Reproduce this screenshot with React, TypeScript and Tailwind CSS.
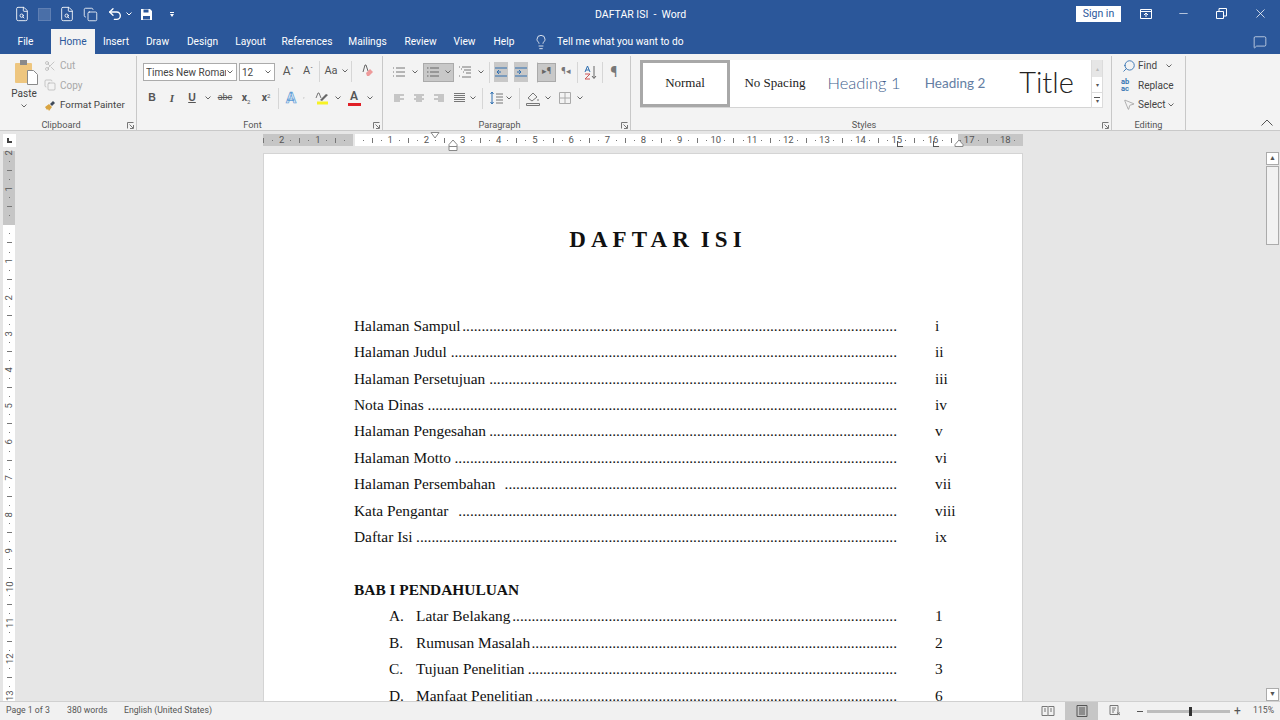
import { ReactNode } from "react";
import { Scissors, Copy, Undo2, Lightbulb, MessageSquare, X, Minus, Search, MousePointer2, FileSearch } from "lucide-react";

// label, page number, how many leader dots were typed on that line
const frontMatter: [string, string, number][] = [
  ["Halaman Sampul", "i", 113],
  ["Halaman Judul ", "ii", 116],
  ["Halaman Persetujuan ", "iii", 106],
  ["Nota Dinas ", "iv", 122],
  ["Halaman Pengesahan", "v", 106],
  ["Halaman Motto ", "vi", 115],
  ["Halaman Persembahan  ", "vii", 102],
  ["Kata Pengantar  ", "viii", 114],
  ["Daftar Isi ", "ix", 125],
];

const babOne: [string, string, string, number][] = [
  ["A.", "Latar Belakang", "1", 100],
  ["B.", "Rumusan Masalah", "2", 95],
  ["C.", "Tujuan Penelitian ", "3", 96],
  ["D.", "Manfaat Penelitian ", "6", 94],
];

const tabs = [
  ["File", "w-[51px]"],
  ["Home", "w-[44px]"],
  ["Insert", "w-[42px]"],
  ["Draw", "w-[41px]"],
  ["Design", "w-[49px]"],
  ["Layout", "w-[47px]"],
  ["References", "w-[66px]"],
  ["Mailings", "w-[55px]"],
  ["Review", "w-[51px]"],
  ["View", "w-[37px]"],
  ["Help", "w-[42px]"],
];

const Chev = ({ color = "#666" }: { color?: string }) => (
  <svg width="6" height="4" viewBox="0 0 6 4" fill="none" stroke={color} strokeWidth="1">
    <path d="M.5.5 3 3 5.5.5" />
  </svg>
);

const Cell = ({ className, children }: { className: string; children?: ReactNode }) => (
  <div className={`flex h-[20px] shrink-0 items-center justify-center ${className}`}>{children}</div>
);

const Sep = () => <div className="h-[21px] w-px shrink-0 bg-[#d6d6d6]" />;

const Launcher = () => (
  <svg width="7" height="7" viewBox="0 0 7 7" fill="none" stroke="#777" strokeWidth="1">
    <path d="M.5 6.5v-6h6M6.5 3v3.500H3M2.500 2.500l3.500 3.500" />
  </svg>
);

const Lines = ({ d, color = "#777" }: { d: string; color?: string }) => (
  <svg width="14" height="14" viewBox="0 0 14 14" fill="none" stroke={color} strokeWidth="1">
    <path d={d} />
  </svg>
);

const Group = ({ label, className, children, launcher = true }: { label: string; className: string; children: ReactNode; launcher?: boolean }) => (
  <div className={`flex h-[76px] shrink-0 flex-col border-r border-[#c8c8c8] ${className}`}>
    <div className="min-h-0 flex-1">{children}</div>
    {launcher ? (
      <div className="relative flex h-[14px] items-center justify-center pr-[14px] text-[9.200px] text-[#555]">
        {label}
        <span className="absolute right-[2px] top-[4px] flex">
          <Launcher />
        </span>
      </div>
    ) : (
      <div className="flex h-[14px] items-center justify-center text-[9.200px] text-[#555]">{label}</div>
    )}
  </div>
);

const Clipboard = () => (
  <Group label="Clipboard" className="w-[137px]">
    <div className="flex">
      <div className="flex w-[44px] flex-col items-center pl-[4px] pt-[4px]">
        <svg className="ml-[4px]" width="23" height="25" viewBox="0 0 23 25">
          <rect x="0" y="3" width="17" height="20" rx="1" fill="#eec67f" />
          <rect x="5" y="0" width="7" height="5" fill="#8a8a8a" />
          <path d="M12.500 10.500h6l4 4v10h-10z" fill="#fff" stroke="#8a8a8a" strokeWidth="1" />
        </svg>
        <span className="mt-[2px] text-[10px] leading-[14px] text-[#444]">Paste</span>
        <span className="mt-[3px] flex">
          <Chev />
        </span>
      </div>
      <div className="flex flex-col text-[10px] leading-[19.500px]">
        <div className="flex h-[19.500px] items-center gap-[4px] text-[#a8a8a8]">
          <Scissors size={12} strokeWidth={1.200} />
          <span>Cut</span>
        </div>
        <div className="flex h-[19.500px] items-center gap-[4px] text-[#a8a8a8]">
          <Copy size={12} strokeWidth={1.200} />
          <span>Copy</span>
        </div>
        <div className="flex h-[19.500px] items-center gap-[4px] text-[9.800px] text-[#444]">
          <svg width="12" height="12" viewBox="0 0 12 12">
            <path d="M1 8l4-3 3 3-3 4-1-2-1 1z" fill="#d9a441" />
            <path d="M6 5l3-3 2 2-3 3z" fill="#3f4a5a" />
          </svg>
          <span>Format Painter</span>
        </div>
      </div>
    </div>
  </Group>
);

const FontGroup = () => (
  <Group label="Font" className="w-[246px]">
    <div className="flex h-[25px] items-end pl-[6px]">
      <div className="flex h-[18px] w-[94px] items-center justify-between border border-[#ababab] bg-white pl-[2px] pr-[3px] text-[10px] text-[#444]">
        <span className="overflow-hidden whitespace-nowrap">Times New Romar</span>
        <span className="ml-[1px] flex shrink-0">
          <Chev />
        </span>
      </div>
      <div className="ml-[2px] flex h-[18px] w-[36px] items-center justify-between border border-[#ababab] bg-white pl-[2px] pr-[3px] text-[10px] text-[#444]">
        <span>12</span>
        <Chev />
      </div>
      <div className="flex h-[20px] items-center text-[#555]">
        <Cell className="ml-[2px] w-[22px] text-[12px]">
          A<span className="mb-[6px] text-[6px]">^</span>
        </Cell>
        <Cell className="w-[18px] text-[11px]">
          A<span className="mb-[6px] text-[6px]">ˇ</span>
        </Cell>
        <span className="ml-[2px]">
          <Sep />
        </span>
        <Cell className="w-[22px] text-[11px]">Aa</Cell>
        <Cell className="w-[6px]">
          <Chev />
        </Cell>
        <span className="ml-[3px]">
          <Sep />
        </span>
        <Cell className="ml-[2px] w-[26px]">
          <svg width="14" height="14" viewBox="0 0 14 14">
            <path d="M3 8 5 1h1l2 6" fill="none" stroke="#666" />
            <path d="m6 9 4-4 3 3-4 4H7z" fill="#ee9a9a" />
          </svg>
        </Cell>
      </div>
    </div>
    <div className="mt-[7px] flex h-[20px] items-center pl-[5px] text-[#555]">
      <Cell className="w-[20px] font-['Liberation_Sans',sans-serif] text-[10.500px] font-bold">B</Cell>
      <Cell className="w-[20px] font-['Liberation_Serif',serif] text-[11px] font-bold italic">I</Cell>
      <Cell className="w-[20px] font-['Liberation_Sans',sans-serif] text-[10.500px] font-bold underline">U</Cell>
      <Cell className="w-[12px]">
        <Chev />
      </Cell>
      <Cell className="w-[22px] text-[9px] line-through">abc</Cell>
      <Cell className="w-[20px] text-[10.500px] font-bold">
        x<span className="mt-[6px] text-[6px] font-normal">2</span>
      </Cell>
      <Cell className="w-[20px] text-[10.500px] font-bold">
        x<span className="mb-[6px] text-[6px] font-normal">2</span>
      </Cell>
      <span className="ml-[2px]">
        <Sep />
      </span>
      <Cell className="w-[24px] text-[15px] font-bold text-[#dbe8f5] [-webkit-text-stroke:0.7px_#5b9bd5]">A</Cell>
      <Cell className="w-[2px]">
        <Chev />
      </Cell>
      <Cell className="ml-[5px] w-[24px]">
        <svg width="15" height="15" viewBox="0 0 15 15">
          <path d="M2 12h11" stroke="#f7f224" strokeWidth="3" />
          <path d="m5 9 6-6 2 1-6 6z" fill="#666" />
          <path d="M1 7 3 2h1l2 5" fill="none" stroke="#777" />
        </svg>
      </Cell>
      <Cell className="w-[8px]">
        <Chev />
      </Cell>
      <div className="ml-[2px] flex h-[20px] w-[20px] flex-col items-center justify-center">
        <span className="text-[12px] font-semibold leading-[11px] text-[#555]">A</span>
        <span className="mt-[1px] h-[3px] w-[13px] bg-[#e01f26]" />
      </div>
      <Cell className="ml-[2px] w-[8px]">
        <Chev />
      </Cell>
    </div>
  </Group>
);

const ParagraphGroup = () => (
  <Group label="Paragraph" className="w-[248px]">
    <div className="flex h-[26px] items-end pl-[9px]">
      <div className="flex h-[20px] items-center">
        <Cell className="w-[14px]">
          <Lines d="M1 3h1M1 7h1M1 11h1M4 3h9M4 7h9M4 11h9" />
        </Cell>
        <Cell className="ml-[5px] w-[8px]">
          <Chev />
        </Cell>
        <div className="ml-[4px] flex h-[19px] w-[31px] items-center justify-center gap-[5px] border border-[#aaa] bg-[#c8c8c8]">
          <Lines d="M1 3h1.500M1 7h1.500M1 11h1.500M4 3h9M4 7h9M4 11h9" color="#666" />
          <Chev />
        </div>
        <Cell className="ml-[4px] w-[14px]">
          <Lines d="M1 2h1M3 4h1M5 7h1M1 11h1M4 2h9M6 5h7M8 8h5M4 12h9" />
        </Cell>
        <Cell className="ml-[5px] w-[8px]">
          <Chev />
        </Cell>
        <span className="ml-[4px]">
          <Sep />
        </span>
        <Cell className="ml-[4px] w-[14px] bg-[#c8c8c8]">
          <Lines d="M1 3h12M1 11h12M7 7H3M5 5 3 7l2 2" color="#2f6fb0" />
        </Cell>
        <Cell className="ml-[6px] w-[14px] bg-[#c8c8c8]">
          <Lines d="M1 3h12M1 11h12M3 7h4M5 5l2 2-2 2" color="#2f6fb0" />
        </Cell>
        <span className="ml-[9px]">
          <Sep />
        </span>
        <div className="ml-[-1px] flex h-[19px] w-[19px] items-center justify-center border border-[#aaa] bg-[#c8c8c8] text-[9px] text-[#666]">
          ▸¶
        </div>
        <Cell className="ml-[1px] w-[18px] text-[9px] text-[#777]">¶◂</Cell>
        <span className="ml-[2px]">
          <Sep />
        </span>
        <Cell className="ml-[4px] w-[18px]">
          <svg width="14" height="15" viewBox="0 0 14 15" fill="none">
            <path d="M1 7 3.500 1 6 7M2 5h3" stroke="#2f6fb0" />
            <path d="M1 9h5l-5 5h5" stroke="#c55" />
            <path d="M10 1v12M8 11l2 2.500 2-2.500" stroke="#666" />
          </svg>
        </Cell>
        <span className="ml-[2px]">
          <Sep />
        </span>
        <Cell className="w-[22px] text-[14px] text-[#777]">¶</Cell>
      </div>
    </div>
    <div className="mt-[6px] flex h-[20px] items-center pl-[9px]">
      <Cell className="w-[14px]">
        <Lines d="M2 4h10M2 6h6M2 8h10M2 10h6" color="#999" />
      </Cell>
      <Cell className="ml-[6px] w-[14px]">
        <Lines d="M2 4h10M4 6h6M2 8h10M4 10h6" color="#999" />
      </Cell>
      <Cell className="ml-[6px] w-[14px]">
        <Lines d="M2 4h10M6 6h6M2 8h10M6 10h6" color="#999" />
      </Cell>
      <Cell className="ml-[6px] w-[14px]">
        <Lines d="M2 2.500h11M2 4.500h11M2 6.500h11M2 8.500h11M2 10.500h11" color="#777" />
      </Cell>
      <Cell className="ml-[3px] w-[8px]">
        <Chev />
      </Cell>
      <span className="ml-[5px]">
        <Sep />
      </span>
      <Cell className="ml-[7px] w-[14px]">
        <svg width="14" height="14" viewBox="0 0 14 14" fill="none">
          <path d="M2 1v12M.5 3 2 1l1.500 2M.5 11 2 13l1.500-2" stroke="#2f6fb0" />
          <path d="M6 3h7M6 6h7M6 9h7M6 12h7" stroke="#777" />
        </svg>
      </Cell>
      <Cell className="ml-[1px] w-[8px]">
        <Chev />
      </Cell>
      <span className="ml-[6px]">
        <Sep />
      </span>
      <Cell className="ml-[6px] w-[14px]">
        <svg width="14" height="15" viewBox="0 0 14 15" fill="none" stroke="#777">
          <path d="m2 7 5-5 4 4-5 4zM12 8v2" />
          <path d="M.5 12.500h13v2H.5z" fill="#eee" />
        </svg>
      </Cell>
      <Cell className="ml-[4px] w-[8px]">
        <Chev />
      </Cell>
      <Cell className="ml-[6px] w-[14px]">
        <Lines d="M1.500 1.500h11v11h-11zM7 1.500v11M1.500 7h11" color="#aaa" />
      </Cell>
      <Cell className="ml-[4px] w-[8px]">
        <Chev />
      </Cell>
    </div>
  </Group>
);

const StylesGroup = () => (
  <Group label="Styles" className="w-[481px]">
    <div className="flex h-[52px] pl-[9px] pt-[4px]">
      <div className="flex h-[48px] w-[451px] items-center border-b border-[#d4d4d4] bg-white">
        <div className="flex h-[47px] w-[90px] items-center justify-center border-[3px] border-[#a8a8a8] pb-[2px] font-['Liberation_Serif',serif] text-[13px] text-[#222]">
          Normal
        </div>
        <div className="w-[90px] pb-[2px] text-center font-['Liberation_Serif',serif] text-[13px] text-[#222]">No Spacing</div>
        <div className="w-[88px] text-center font-['Lato',sans-serif] text-[16.500px] font-light text-[#3f5f8e]">Heading 1</div>
        <div className="w-[94px] text-center font-['Lato',sans-serif] text-[13.500px] text-[#647ea3]">Heading 2</div>
        <div className="flex-1 pb-[3px] text-center font-['Lato',sans-serif] text-[29px] font-light text-[#222]">Title</div>
      </div>
      <div className="flex h-[48px] w-[12px] flex-col border-x border-[#dcdcdc] bg-white">
        <div className="flex h-[17px] items-center justify-center bg-[#e6e6e6] text-[6px] text-[#bbb]">▴</div>
        <div className="flex h-[15px] items-center justify-center text-[6px] text-[#555]">▾</div>
        <div className="flex h-[16px] flex-col items-center justify-center border-y border-[#dcdcdc] text-[6px] leading-[5px] text-[#555]">
          <span className="h-px w-[6px] bg-[#555]" />
          <span>▾</span>
        </div>
      </div>
    </div>
  </Group>
);

const EditingGroup = () => (
  <Group label="Editing" className="w-[74px]" launcher={false}>
    <div className="flex flex-col pl-[9px] text-[10px] text-[#444]">
      <div className="flex h-[19.500px] items-center">
        <Search size={14} strokeWidth={1.500} className="w-[16px] -scale-x-100 text-[#2f6fb0]" />
        <span className="ml-[1px]">Find</span>
        <span className="ml-[9px] flex">
          <Chev />
        </span>
      </div>
      <div className="flex h-[19.500px] items-center">
        <span className="w-[16px] text-[7.500px] font-semibold leading-[7px] text-[#2f6fb0]">
          ab
          <br />
          ac
        </span>
        <span className="ml-[1px]">Replace</span>
      </div>
      <div className="flex h-[19.500px] items-center">
        <MousePointer2 size={13} strokeWidth={1} className="w-[16px] text-[#777]" />
        <span className="ml-[1px]">Select</span>
        <span className="ml-[3px] flex">
          <Chev />
        </span>
      </div>
    </div>
  </Group>
);

// one cell per quarter centimetre
const RulerMark = ({ k }: { k: number }) => {
  if (k === 0) return null;
  if (k % 4 === 0) return <span className="text-[9.500px] leading-none text-[#555]">{Math.abs(k / 4)}</span>;
  if (k % 2 === 0) return <span className="h-[5px] w-px shrink-0 bg-[#777]" />;
  return <span className="h-px w-px shrink-0 bg-[#777]" />;
};

const HRuler = () => {
  const cells = Array.from({ length: 84 }, (_, i) => i - 10);
  return (
    <div className="w-[760px] shrink-0">
      <div className="relative ml-[-4px] flex h-[12px] w-[764px] bg-[linear-gradient(to_right,#e6e6e6_4px,#c6c6c6_4px,#c6c6c6_94px,#e6e6e6_94px,#e6e6e6_96px,#fff_96px,#fff_699px,#c6c6c6_699px)]">
        {cells.map((k) => (
          <div key={k} className="flex h-[12px] w-[9.050px] shrink-0 items-center justify-center">
            <RulerMark k={k} />
          </div>
        ))}
        {/* indent markers */}
        <svg className="absolute left-[171px] top-[-2px]" width="10" height="8" viewBox="0 0 10 8" fill="#fff" stroke="#888">
          <path d="M1 .5h8L5 6z" />
        </svg>
        <svg className="absolute left-[189px] top-[5px]" width="10" height="12" viewBox="0 0 10 12" fill="#fff" stroke="#888">
          <path d="M1 11.500v-6L5 1l4 4.500v6zM1 7.500h8" />
        </svg>
        <svg className="absolute left-[695px] top-[5px]" width="10" height="8" viewBox="0 0 10 8" fill="#fff" stroke="#888">
          <path d="M1 7.500v-2L5 1l4 4.500v2z" />
        </svg>
        <span className="absolute left-[638px] top-[7px] h-[6px] w-[6px] border-b border-l border-[#555]" />
        <span className="absolute left-[674px] top-[7px] h-[6px] w-[6px] border-b border-l border-[#555]" />
      </div>
    </div>
  );
};

const VRuler = () => {
  const cells = Array.from({ length: 62 }, (_, i) => i - 8);
  return (
    <div className="flex w-[12px] flex-col overflow-hidden bg-[linear-gradient(to_bottom,#e6e6e6_3px,#c6c6c6_3px,#c6c6c6_77px,#fff_77px)]">
      {cells.map((k) => (
        <div key={k} className="flex h-[9.050px] w-[12px] shrink-0 items-center justify-center">
          {k === 0 ? null : k % 4 === 0 ? (
            <span className="-rotate-90 text-[9.500px] leading-none text-[#555]">{Math.abs(k / 4)}</span>
          ) : k % 2 === 0 ? (
            <span className="h-px w-[5px] bg-[#777]" />
          ) : (
            <span className="h-px w-px bg-[#777]" />
          )}
        </div>
      ))}
    </div>
  );
};

const Leader = ({ count }: { count: number }) => (
  <div className="flex min-w-0 flex-1 justify-end whitespace-nowrap">
    <span>{".".repeat(count)}</span>
  </div>
);

const Page = () => (
  <div className="h-full overflow-hidden border-x border-t border-[#d4d4d4] bg-white pl-[90px] pt-[71px] font-['Liberation_Serif',serif] text-[15.400px] text-[#111]">
    <div className="h-[30px] w-[608px] text-center text-[23px] font-bold leading-[30px] tracking-[5.100px] [word-spacing:-4px]">DAFTAR ISI</div>
    <div className="mt-[57px]">
      {frontMatter.map(([label, page, dots]) => (
        <div key={label} className="flex h-[26.450px] items-center">
          <div className="flex w-[543px]">
            <span className="shrink-0 whitespace-pre">{label}</span>
            <Leader count={dots} />
          </div>
          <span className="ml-[38px]">{page}</span>
        </div>
      ))}
      <div className="h-[26.450px]" />
      <div className="flex h-[26.450px] items-center font-bold">BAB I PENDAHULUAN</div>
      {babOne.map(([letter, label, page, dots]) => (
        <div key={letter} className="flex h-[26.450px] items-center">
          <div className="flex w-[543px] pl-[35px]">
            <span className="w-[27px] shrink-0">{letter}</span>
            <span className="shrink-0 whitespace-pre">{label}</span>
            <Leader count={dots} />
          </div>
          <span className="ml-[38px]">{page}</span>
        </div>
      ))}
    </div>
  </div>
);

const Scrollbar = () => (
  <div className="flex w-[14px] shrink-0 flex-col pr-px pt-[21px]">
    <div className="flex h-[13px] items-center justify-center border border-[#ababab] bg-white text-[7px] text-[#555]">▲</div>
    <div className="mt-px h-[79px] border border-[#ababab] bg-[#f2f2f2]" />
    <div className="flex-1" />
    <div className="flex h-[13px] items-center justify-center border border-[#ababab] bg-white text-[7px] text-[#555]">▼</div>
  </div>
);

export default function App() {
  return (
    <div className="flex h-screen w-[1280px] flex-col overflow-hidden bg-[#e6e6e6] font-['Roboto',sans-serif]">
      {/* title bar */}
      <div className="relative flex h-[27px] shrink-0 items-center bg-[#2b579a] text-white">
        <div className="flex items-center pl-[14px] pt-[1px]">
          <FileSearch size={16} strokeWidth={1.300} />
          <span className="ml-[8px] h-[13px] w-[13px] border border-[#5f7fb3] bg-[#4a6fa8]" />
          <FileSearch size={16} strokeWidth={1.300} className="ml-[8px]" />
          <Copy size={15} strokeWidth={1.300} className="ml-[8px]" />
          <Undo2 size={16} strokeWidth={2} className="ml-[9px]" />
          <span className="ml-[3px] flex">
            <Chev color="#fff" />
          </span>
          <svg className="ml-[8px]" width="13" height="13" viewBox="0 0 13 13">
            <path d="M1 1h9l2 2v9H1z" fill="#fff" />
            <path d="M3.500 1.500h5v3h-5zM3 8h7v3.500H3z" fill="#2b579a" />
          </svg>
          <span className="ml-[17px] flex flex-col items-center gap-px">
            <span className="h-px w-[4px] bg-white" />
            <span className="h-0 w-0 border-x-[2.500px] border-t-[3px] border-x-transparent border-t-white" />
          </span>
        </div>
        <div className="absolute left-[595px] mt-[3px] whitespace-pre text-[10.500px]">DAFTAR ISI  -  Word</div>
        <div className="ml-auto flex items-center">
          <div className="flex h-[16px] w-[45px] items-center justify-center bg-white text-[10.500px] text-[#2b579a]">Sign in</div>
          <div className="ml-[17px] flex w-[15px] justify-center">
            <svg width="12" height="10" viewBox="0 0 12 10" fill="none" stroke="#fff">
              <path d="M.5.500h11v9H.5zM.5 2.500h11M6 8V4M4 6l2-2 2 2" />
            </svg>
          </div>
          <Minus size={13} strokeWidth={1.200} className="ml-[24px]" />
          <svg className="ml-[26px]" width="11" height="11" viewBox="0 0 11 11" fill="none" stroke="#fff">
            <path d="M.5 3.500h7v7h-7zM3 3.500v-3h7.500V8H7.500" />
          </svg>
          <X size={15} strokeWidth={1.200} className="ml-[26px] mr-[12px]" />
        </div>
      </div>
      {/* tabs */}
      <div className="flex h-[27px] shrink-0 items-end bg-[#2b579a] text-[10.200px] text-white">
        {tabs.map(([name, width]) =>
          name === "Home" ? (
            <div key={name} className={`flex h-[25px] items-center justify-center bg-[#f3f3f3] text-[#2b579a] ${width}`}>
              {name}
            </div>
          ) : (
            <div key={name} className={`flex h-[25px] items-center justify-center ${width}`}>
              {name}
            </div>
          ),
        )}
        <div className="flex h-[25px] items-center pl-[8px]">
          <Lightbulb size={16} strokeWidth={1.200} />
          <span className="ml-[8px]">Tell me what you want to do</span>
        </div>
        <div className="ml-auto flex h-[25px] items-center pr-[13px]">
          <MessageSquare size={14} strokeWidth={1.100} />
        </div>
      </div>
      {/* ribbon */}
      <div className="relative flex h-[77px] shrink-0 items-start overflow-hidden border-b border-[#c9c9c9] bg-[#f3f3f3] pt-[2px]">
        <Clipboard />
        <FontGroup />
        <ParagraphGroup />
        <StylesGroup />
        <EditingGroup />
        <svg className="absolute right-[7px] top-[65px]" width="12" height="7" viewBox="0 0 12 7" fill="none" stroke="#555">
          <path d="m.5 6.500 5.500-5.500 5.500 5.500" />
        </svg>
      </div>
      {/* document area */}
      <div className="flex min-h-0 flex-1">
        <div className="flex w-[20px] shrink-0 flex-col items-start overflow-hidden pl-[3px] pt-[3px]">
          <div className="flex h-[13px] w-[13px] shrink-0 items-center justify-center bg-white">
            <span className="h-[5px] w-[5px] border-b-2 border-l-2 border-[#444]" />
          </div>
          <div className="mt-px flex min-h-0 flex-1">
            <VRuler />
          </div>
        </div>
        <div className="flex min-w-0 flex-1 flex-col items-center pt-[3px]">
          <HRuler />
          <div className="mt-[7px] min-h-0 w-[760px] flex-1">
            <Page />
          </div>
        </div>
        <Scrollbar />
      </div>
      {/* status bar */}
      <div className="flex h-[19px] shrink-0 items-center border-t border-[#d0d0d0] bg-[#f1f1f1] text-[8.700px] text-[#555]">
        <span className="ml-[6px] w-[61px]">Page 1 of 3</span>
        <span className="w-[57px]">380 words</span>
        <span>English (United States)</span>
        <div className="ml-auto flex h-[19px] items-center">
          <svg width="14" height="12" viewBox="0 0 14 12" fill="none" stroke="#777">
            <path d="M1 1.500h5.500l.5.500.5-.5H13v9H7.500l-.5.500-.5-.5H1zM7 2v9M3 4h2M3 6h2M9 4h2M9 6h2" />
          </svg>
          <div className="ml-[10px] flex h-[19px] w-[33px] items-center justify-center bg-[#c6c6c6]">
            <Lines d="M2 1.500h10v11H2zM4 4h6M4 6h6M4 8h6M4 10h6" color="#555" />
          </div>
          <span className="ml-[10px] flex">
            <Lines d="M2 1.500h8v9H2zM4 4h4M4 6h3M4 8h2M9 8.500l3 2.500M12 8.500 9 11" />
          </span>
          <span className="ml-[15px] h-px w-[6px] bg-[#555]" />
          <div className="ml-[4px] flex h-[3px] w-[83px] items-center bg-[#bdbdbd]">
            <span className="ml-[42px] h-[9px] w-[3px] bg-[#333]" />
          </div>
          <span className="ml-[3px] w-[9px] text-center text-[12px] leading-none">+</span>
          <span className="ml-[11px] w-[27px] text-[8.700px]">115%</span>
        </div>
      </div>
    </div>
  );
}
